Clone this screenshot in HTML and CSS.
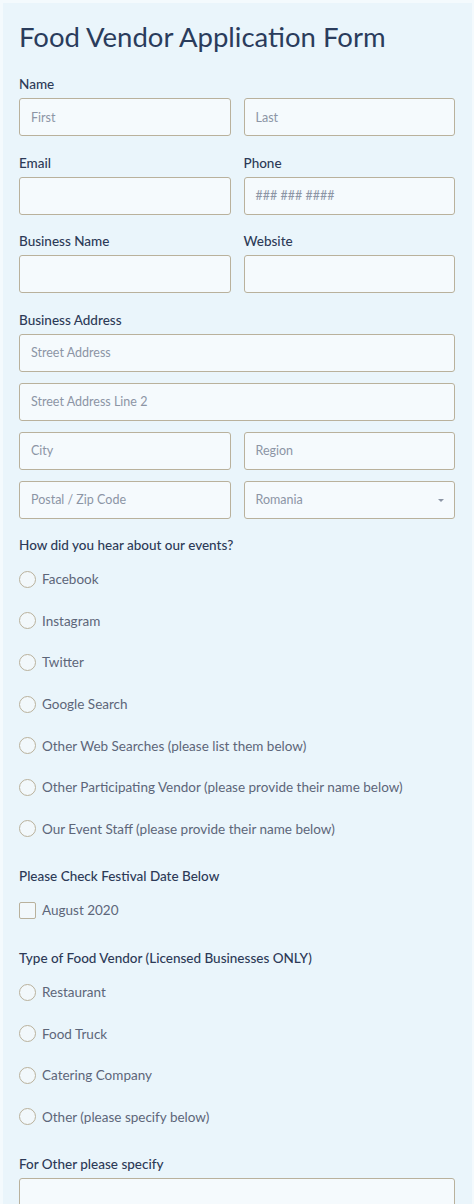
FILE: index.html
```html
<!DOCTYPE html>
<html>
<head>
<meta charset="utf-8">
<link rel="stylesheet" href="styles.css">
</head>
<body>
<div class="card">
  <h1 class="title">Food Vendor Application Form</h1>

  <div class="field">
    <div class="label">Name</div>
    <div class="row2">
      <div class="input"><span class="ph">First</span></div>
      <div class="input"><span class="ph">Last</span></div>
    </div>
  </div>

  <div class="row2 field">
    <div>
      <div class="label">Email</div>
      <div class="input"></div>
    </div>
    <div>
      <div class="label">Phone</div>
      <div class="input"><span class="ph">### ### ####</span></div>
    </div>
  </div>

  <div class="row2 field">
    <div>
      <div class="label">Business Name</div>
      <div class="input"></div>
    </div>
    <div>
      <div class="label">Website</div>
      <div class="input"></div>
    </div>
  </div>

  <div class="field">
    <div class="label">Business Address</div>
    <div class="stack">
      <div class="input"><span class="ph">Street Address</span></div>
      <div class="input"><span class="ph">Street Address Line 2</span></div>
      <div class="row2">
        <div class="input"><span class="ph">City</span></div>
        <div class="input"><span class="ph">Region</span></div>
      </div>
      <div class="row2">
        <div class="input"><span class="ph">Postal / Zip Code</span></div>
        <div class="input select"><span class="ph">Romania</span><span class="caret"></span></div>
      </div>
    </div>
  </div>

  <div class="field">
    <div class="label opts">How did you hear about our events?</div>
    <div class="opt"><span class="radio"></span>Facebook</div>
    <div class="opt"><span class="radio"></span>Instagram</div>
    <div class="opt"><span class="radio"></span>Twitter</div>
    <div class="opt"><span class="radio"></span>Google Search</div>
    <div class="opt"><span class="radio"></span>Other Web Searches (please list them below)</div>
    <div class="opt"><span class="radio"></span>Other Participating Vendor (please provide their name below)</div>
    <div class="opt"><span class="radio"></span>Our Event Staff (please provide their name below)</div>
  </div>

  <div class="field">
    <div class="label opts">Please Check Festival Date Below</div>
    <div class="opt"><span class="check"></span>August 2020</div>
  </div>

  <div class="field">
    <div class="label opts">Type of Food Vendor (Licensed Businesses ONLY)</div>
    <div class="opt"><span class="radio"></span>Restaurant</div>
    <div class="opt"><span class="radio"></span>Food Truck</div>
    <div class="opt"><span class="radio"></span>Catering Company</div>
    <div class="opt"><span class="radio"></span>Other (please specify below)</div>
  </div>

  <div class="field">
    <div class="label">For Other please specify</div>
    <div class="input tall"></div>
  </div>
</div>
</body>
</html>
```

FILE: styles.css
```css
html, body {
  margin: 0;
  padding: 0;
}
body {
  background: #f4fafd;
  font-family: Lato, "Open Sans", sans-serif;
  height: 1204px;
  overflow: hidden;
}
.card {
  margin: 3px 2px 0 3px;
  background: #eaf5fb;
  padding: 17px 17px 40px 16px;
  min-height: 1200px;
  box-sizing: border-box;
}
.title {
  margin: 0;
  font-weight: 400;
  font-size: 27.5px;
  line-height: 34px;
  color: #2a3c5c;
  padding-bottom: 21px;
}
.field {
  margin-bottom: 17.5px;
}
.label {
  font-size: 13.5px;
  line-height: 18px;
  font-weight: 500;
  color: #2d3a57;
  margin-bottom: 5px;
}
.label.opts {
  margin-bottom: 4.5px;
}
.row2 {
  display: grid;
  grid-template-columns: 1fr 1fr;
  column-gap: 13px;
}
.stack {
  display: flex;
  flex-direction: column;
  gap: 11px;
}
.input {
  box-sizing: border-box;
  height: 38px;
  border: 1px solid #b9b19c;
  border-radius: 3px;
  background: #f5fafd;
  display: flex;
  align-items: center;
  padding: 0 11px;
  position: relative;
}
.input.tall {
  height: 60px;
}
.ph {
  font-size: 12.5px;
  color: #8c95a5;
}
.select .caret {
  position: absolute;
  right: 10px;
  top: 17px;
  width: 0;
  height: 0;
  border-left: 3px solid transparent;
  border-right: 3px solid transparent;
  border-top: 3px solid #8c95a5;
}
.opt {
  display: flex;
  align-items: center;
  height: 41.6px;
  font-size: 13.5px;
  color: #5d6679;
}
.radio {
  box-sizing: border-box;
  width: 17px;
  height: 17px;
  border: 1px solid #b9b19c;
  border-radius: 50%;
  margin-right: 6px;
  flex: none;
  background: #f2f8fb;
}
.check {
  box-sizing: border-box;
  width: 17px;
  height: 17px;
  border: 1px solid #b9b19c;
  border-radius: 2px;
  margin-right: 6px;
  flex: none;
  background: #f2f8fb;
}
```
